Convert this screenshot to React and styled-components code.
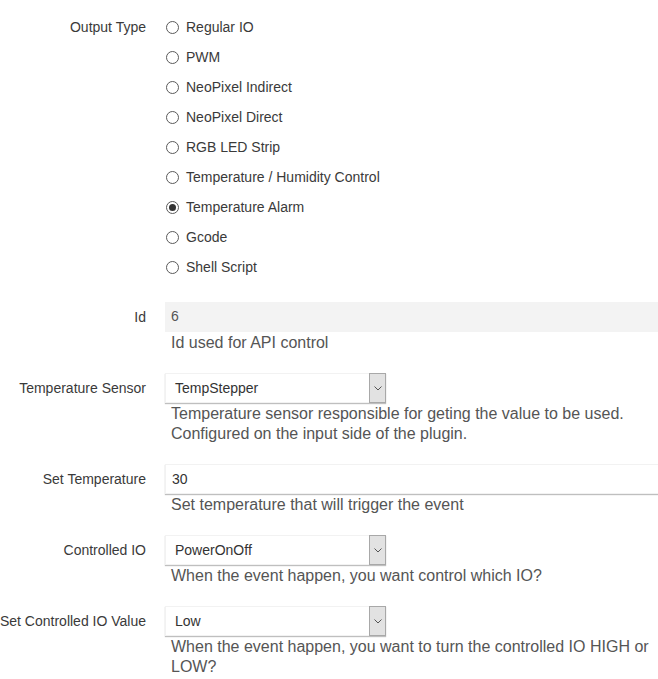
import React from "react";
import styled, { createGlobalStyle } from "styled-components";

const GlobalStyle = createGlobalStyle`
  body {
    margin: 0;
    background: #fff;
    font-family: "Liberation Sans", Arial, sans-serif;
    color: #333;
    overflow: hidden;
  }
`;

const Form = styled.div`
  padding-top: 12px;
  width: 658px;
  display: flex;
  flex-direction: column;
  gap: 20px;
`;

const Row = styled.div`
  display: grid;
  grid-template-columns: 146px 1fr;
  column-gap: 19px;
  align-items: start;
`;

const Label = styled.div`
  display: flex;
  justify-content: flex-end;
  white-space: nowrap;
  font-size: 14px;
  height: 30px;
  line-height: 30px;
  color: #3a3a3a;
`;

const Field = styled.div`
  min-width: 0;
  display: flex;
  flex-direction: column;
`;

const RadioList = styled.div`
  display: flex;
  flex-direction: column;
`;

const RadioRow = styled.label`
  display: flex;
  align-items: center;
  gap: 7px;
  height: 30px;
  font-size: 14px;
  color: #3a3a3a;
  padding-left: 1px;
`;

const Radio = styled.span`
  width: 13px;
  height: 13px;
  box-sizing: border-box;
  border: 1px solid #5a5a5a;
  border-radius: 50%;
  display: flex;
  align-items: center;
  justify-content: center;
  &::after {
    content: "";
    width: 7px;
    height: 7px;
    border-radius: 50%;
    background: ${({ $checked }) => ($checked ? "#333" : "transparent")};
  }
`;

const TextInput = styled.div`
  height: 30px;
  box-sizing: border-box;
  width: calc(100% + 8px);
  padding-left: 6px;
  font-size: 14px;
  line-height: 29px;
  color: ${({ $disabled }) => ($disabled ? "#555" : "#333")};
  background: ${({ $disabled }) => ($disabled ? "#f3f3f3" : "#fff")};
  border: ${({ $disabled }) => ($disabled ? "none" : "1px solid #f2f2f2")};
  box-shadow: ${({ $disabled }) =>
    $disabled ? "none" : "0 1px 1px rgba(0, 0, 0, 0.25)"};
`;

const Select = styled.div`
  width: 221px;
  height: 30px;
  box-sizing: border-box;
  display: flex;
  background: #fff;
  border: 1px solid #f2f2f2;
  box-shadow: 0 1px 1px rgba(0, 0, 0, 0.25);
`;

const SelectValue = styled.div`
  flex: 1;
  padding-left: 9px;
  font-size: 14px;
  line-height: 28px;
  color: #333;
`;

const Arrow = styled.div`
  width: 17px;
  box-sizing: border-box;
  margin: -1px -1px -1px 0;
  background: #e2e2e2;
  border: 1px solid #a8a8a8;
  display: flex;
  align-items: center;
  justify-content: center;
`;

const Help = styled.div`
  padding-top: 1px;
  padding-left: 6px;
  font-size: 16px;
  line-height: 20px;
  color: #555;
`;

const Chevron = () => (
  <svg width="8" height="5" viewBox="0 0 8 5">
    <path d="M0.5 0.5 L4 4 L7.5 0.5" fill="none" stroke="#555" strokeWidth="1" />
  </svg>
);

const outputTypes = [
  "Regular IO",
  "PWM",
  "NeoPixel Indirect",
  "NeoPixel Direct",
  "RGB LED Strip",
  "Temperature / Humidity Control",
  "Temperature Alarm",
  "Gcode",
  "Shell Script",
];

const Dropdown = ({ value }) => (
  <Select>
    <SelectValue>{value}</SelectValue>
    <Arrow>
      <Chevron />
    </Arrow>
  </Select>
);

export default function App() {
  return (
    <>
      <GlobalStyle />
      <Form>
        <Row>
          <Label>Output Type</Label>
          <RadioList>
            {outputTypes.map((t) => (
              <RadioRow key={t}>
                <Radio $checked={t === "Temperature Alarm"} />
                {t}
              </RadioRow>
            ))}
          </RadioList>
        </Row>

        <Row>
          <Label>Id</Label>
          <Field>
            <TextInput $disabled>6</TextInput>
            <Help>Id used for API control</Help>
          </Field>
        </Row>

        <Row>
          <Label>Temperature Sensor</Label>
          <Field>
            <Dropdown value="TempStepper" />
            <Help>
              Temperature sensor responsible for geting the value to be used.
              <br />
              Configured on the input side of the plugin.
            </Help>
          </Field>
        </Row>

        <Row>
          <Label>Set Temperature</Label>
          <Field>
            <TextInput>30</TextInput>
            <Help>Set temperature that will trigger the event</Help>
          </Field>
        </Row>

        <Row>
          <Label>Controlled IO</Label>
          <Field>
            <Dropdown value="PowerOnOff" />
            <Help>When the event happen, you want control which IO?</Help>
          </Field>
        </Row>

        <Row>
          <Label>Set Controlled IO Value</Label>
          <Field>
            <Dropdown value="Low" />
            <Help>
              When the event happen, you want to turn the controlled IO HIGH or
              LOW?
            </Help>
          </Field>
        </Row>
      </Form>
    </>
  );
}
